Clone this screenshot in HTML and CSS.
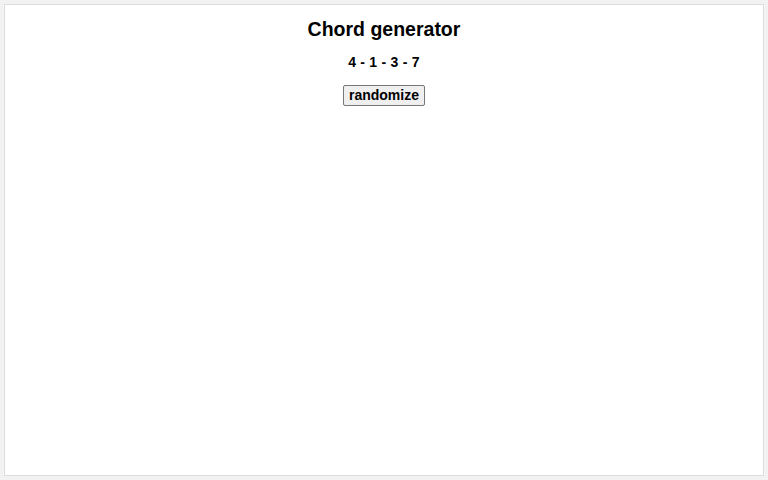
FILE: index.html
```html
<!DOCTYPE html>
<html>
<head>
<meta charset="utf-8">
<link rel="stylesheet" href="styles.css">
</head>
<body>
<main class="card">
  <h1 class="title">Chord generator</h1>
  <p class="chords">4 - 1 - 3 - 7</p>
  <button class="btn" type="button">randomize</button>
</main>
</body>
</html>
```
FILE: styles.css
```css
html, body {
  margin: 0;
  padding: 0;
  height: 100%;
}
body {
  background: #f2f2f2;
  padding: 4px;
  box-sizing: border-box;
  font-family: "Liberation Sans", Arial, sans-serif;
  color: #000;
}
.card {
  box-sizing: border-box;
  width: 760px;
  height: 472px;
  background: #fff;
  border: 1px solid #dcdcdc;
  display: flex;
  flex-direction: column;
  align-items: center;
  padding-top: 13px;
}
.title {
  margin: 0;
  font-size: 19.5px;
  line-height: 23px;
  font-weight: bold;
}
.chords {
  margin: 13px 0 0;
  font-size: 14px;
  line-height: 16px;
  font-weight: bold;
  letter-spacing: 0.25px;
}
.btn {
  margin-top: 15px;
  font-family: "Liberation Sans", Arial, sans-serif;
  font-size: 14px;
  line-height: 17px;
  font-weight: bold;
  color: #000;
  background: #efefef;
  border: 1px solid #767676;
  border-radius: 2px;
  padding: 1px 5px;
}
```
